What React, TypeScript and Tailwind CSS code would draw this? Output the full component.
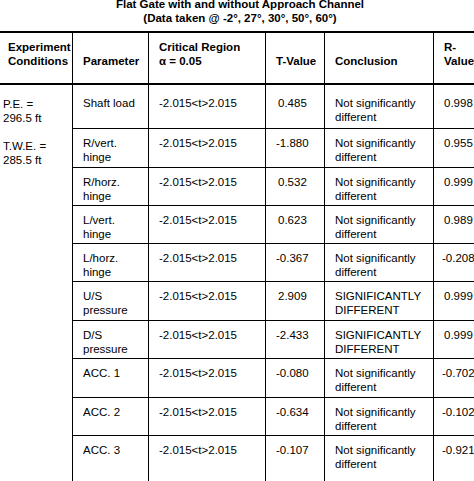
const rows = [
  { param: ['Shaft load'], t: '0.485', concl: ['Not significantly', 'different'], r: '0.998', h: 'h-[44px]', pt: 'pt-[11px]' },
  { param: ['R/vert.', 'hinge'], t: '-1.880', concl: ['Not significantly', 'different'], r: '0.955', h: 'h-[39px]', pt: 'pt-[7px]' },
  { param: ['R/horz.', 'hinge'], t: '0.532', concl: ['Not significantly', 'different'], r: '0.999', h: 'h-[38px]', pt: 'pt-[7px]' },
  { param: ['L/vert.', 'hinge'], t: '0.623', concl: ['Not significantly', 'different'], r: '0.989', h: 'h-[38px]', pt: 'pt-[7px]' },
  { param: ['L/horz.', 'hinge'], t: '-0.367', concl: ['Not significantly', 'different'], r: '-0.208', h: 'h-[38px]', pt: 'pt-[7px]' },
  { param: ['U/S', 'pressure'], t: '2.909', concl: ['SIGNIFICANTLY', 'DIFFERENT'], r: '0.999', h: 'h-[39px]', pt: 'pt-[7px]' },
  { param: ['D/S', 'pressure'], t: '-2.433', concl: ['SIGNIFICANTLY', 'DIFFERENT'], r: '0.999', h: 'h-[38px]', pt: 'pt-[7px]' },
  { param: ['ACC. 1'], t: '-0.080', concl: ['Not significantly', 'different'], r: '-0.702', h: 'h-[39px]', pt: 'pt-[7px]' },
  { param: ['ACC. 2'], t: '-0.634', concl: ['Not significantly', 'different'], r: '-0.102', h: 'h-[38px]', pt: 'pt-[7px]' },
  { param: ['ACC. 3'], t: '-0.107', concl: ['Not significantly', 'different'], r: '-0.921', h: 'h-[60px]', pt: 'pt-[7px]' },
]

const cell = 'border border-black align-top'
const head = 'border border-black border-t-2 border-b-2 align-bottom pb-[15px] pl-[10px] text-left font-bold'

function Num({ v }: { v: string }) {
  // minus sign hangs a little to the left
  return v.startsWith('-') ? <span className="-ml-[2px]">{v}</span> : <span>{v}</span>
}

export default function App() {
  return (
    <div className="w-[474px] h-[481px] overflow-hidden bg-white text-black font-['Liberation_Sans',Arial,sans-serif] text-[11.5px] leading-[14px]">
      <div className="-mt-[3px] pl-[6px] text-center font-bold">
        <p>Flat Gate with and without Approach Channel</p>
        <p>(Data taken @ -2°, 27°, 30°, 50°, 60°)</p>
      </div>

      <table className="mt-[6px] -ml-[3px] w-[500px] table-fixed border-collapse">
        <colgroup>
          <col className="w-[75px]" />
          <col className="w-[76px]" />
          <col className="w-[117px]" />
          <col className="w-[59px]" />
          <col className="w-[109px]" />
          <col className="w-[64px]" />
        </colgroup>
        <thead>
          <tr className="h-[52px]">
            <th className={`${head} pl-[5px]`}>
              Experiment
              <br />
              Conditions
            </th>
            <th className={head}>Parameter</th>
            <th className={head}>
              Critical Region
              <br />α = 0.05
            </th>
            <th className={head}>T-Value</th>
            <th className={head}>Conclusion</th>
            <th className={head}>
              R-
              <br />
              Value
            </th>
          </tr>
        </thead>
        <tbody>
          {rows.map((row, i) => (
            <tr key={i} className={row.h}>
              {i === 0 && (
                <td rowSpan={rows.length} className={`${cell} pl-[5px] pt-[12px]`}>
                  <p>P.E. =</p>
                  <p>296.5 ft</p>
                  <p className="mt-[14px]">T.W.E. =</p>
                  <p>285.5 ft</p>
                </td>
              )}
              <td className={`${cell} ${row.pt} pl-[10px]`}>
                {row.param.map((p, j) => (
                  <p key={j}>{p}</p>
                ))}
              </td>
              <td className={`${cell} ${row.pt} pl-[10px]`}>-2.015&lt;t&gt;2.015</td>
              <td className={`${cell} ${row.pt} pl-[12px]`}>
                <Num v={row.t} />
              </td>
              <td className={`${cell} ${row.pt} pl-[10px]`}>
                {row.concl.map((c, j) => (
                  <p key={j}>{c}</p>
                ))}
              </td>
              <td className={`${cell} ${row.pt} pl-[10px]`}>
                <Num v={row.r} />
              </td>
            </tr>
          ))}
        </tbody>
      </table>
    </div>
  )
}
